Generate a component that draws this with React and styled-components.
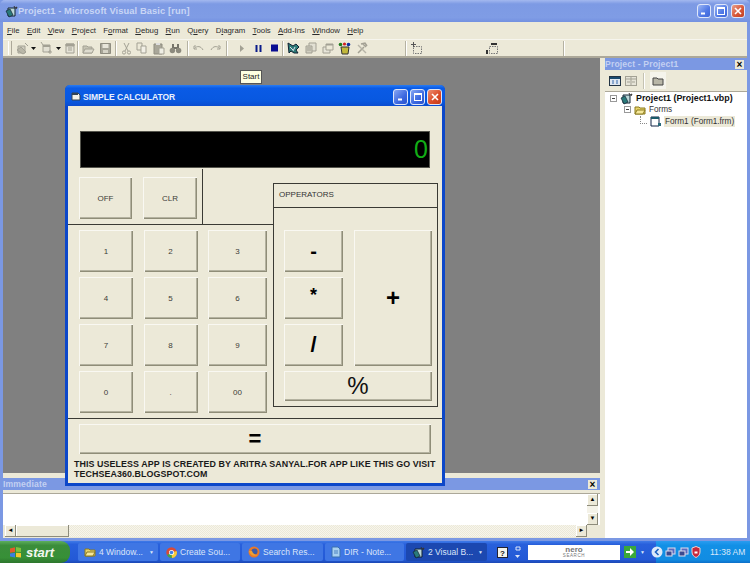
import React from 'react'
import styled, {createGlobalStyle, css} from 'styled-components'

const Global = createGlobalStyle`
	html, body { margin: 0; padding: 0; background: #ece9d8; }
	body { font-family: "Liberation Sans", Arial, sans-serif; }
`

const Screen = styled.div`
	position: relative;
	width: 750px;
	height: 563px;
	overflow: hidden;
	display: flex;
	flex-direction: column;
	background: #7b98e3;
`

/* main window */
const TitleBar = styled.div`
	height: 22px;
	flex: none;
	display: flex;
	align-items: center;
	padding: 0 5px 0 5px;
	background: linear-gradient(#a3b8ef, #7d9ae4 18%, #7f9ce5 80%, #7391e0);
	border-radius: 5px 5px 0 0;
`

const TitleText = styled.div`
	margin-left: 0;
	flex: 1;
	color: #c9d6f5;
	font-size: 9.3px;
	font-weight: bold;
	letter-spacing: 0.1px;
	white-space: nowrap;
`

const WinButtons = styled.div`
	display: flex;
	gap: ${p => p.$big ? 2 : 3}px;
`

const WinButton = styled.div`
	width: 14px;
	height: 14px;
	box-sizing: border-box;
	border: 1px solid #dfe7fa;
	border-radius: 3px;
	display: flex;
	align-items: center;
	justify-content: center;
	background: ${p => p.$red ? 'linear-gradient(135deg, #e9a08c, #d8583a 55%, #c24022)' : 'linear-gradient(135deg, #9db8f5, #4f78e6 60%, #3e66d8)'};
	${p => p.$big && css`
		width: 15px;
		height: 16px;
		background: ${p.$red ? 'linear-gradient(135deg, #ec8f74, #dc4d2a 55%, #c43a18)' : 'linear-gradient(135deg, #86a6f2, #3b68e0 60%, #2c54cc)'};
	`}
`

const AppBody = styled.div`
	flex: 1;
	min-height: 0;
	display: flex;
	flex-direction: column;
	margin: 0 3px 3px;
	background: #ece9d8;
`

const MenuBar = styled.div`
	height: 17px;
	flex: none;
	display: flex;
	align-items: center;
	gap: 7.3px;
	padding-left: 4px;
	font-size: 7.8px;
	color: #2a2a2a;
`

const ToolBar = styled.div`
	height: 19px;
	flex: none;
	box-sizing: border-box;
	display: flex;
	align-items: center;
	padding-left: 5px;
	border-top: 1px solid #f6f5ee;
	border-bottom: 2px solid #aca899;
`

const Handle = styled.div`
	width: 2px;
	height: 14px;
	border-left: 1px solid #fff;
	border-right: 1px solid #aca899;
`

const ToolSep = styled.div`
	width: 1px;
	height: 15px;
	margin-left: ${p => p.$at}px;
	background: #b5b2a2;
	box-shadow: 1px 0 #fff;
`

const ToolSlot = styled.div`
	margin-left: ${p => p.$at}px;
	display: flex;
	align-items: center;
`

const Workspace = styled.div`
	flex: 1;
	min-height: 0;
	display: flex;
`

const LeftPane = styled.div`
	width: 597px;
	flex: none;
	display: flex;
	flex-direction: column;
`

const Mdi = styled.div`
	flex: 1;
	background: #808080;
`

const DockTitle = styled.div`
	height: 12px;
	flex: none;
	display: flex;
	align-items: center;
	justify-content: space-between;
	padding: 0 3px 0 0;
	background: #7b98e3;
	color: #c3d0f2;
	font-size: 8.6px;
	font-weight: bold;
	letter-spacing: 0.15px;
`

const CloseBox = styled.div`
	width: 9px;
	height: 9px;
	background: #ece9d8;
	color: #000;
	font-size: 10px;
	font-weight: bold;
	line-height: 9px;
	text-align: center;
`

const Immediate = styled.div`
	flex: none;
	margin-top: 5px;
	margin-bottom: 1px;
`

const ImmBody = styled.div`
	margin-top: 3px;
	height: 32px;
	display: flex;
	background: #fff;
	border-top: 1px solid #aca899;
	box-sizing: border-box;
`

const ImmText = styled.div`
	flex: 1;
`

const VScroll = styled.div`
	width: 11px;
	margin-right: 2px;
	display: flex;
	flex-direction: column;
	justify-content: space-between;
	background: #f4f2e8;
`

const ScrollBtn = styled.div`
	width: ${p => p.$w || 11}px;
	height: ${p => p.$h || 12}px;
	flex: none;
	box-sizing: border-box;
	background: #ece9d8;
	box-shadow: inset -1px -1px #8e8c7c, inset 1px 1px #fff;
	color: #000;
	font-size: 6px;
	line-height: 11px;
	text-align: center;
`

const HScroll = styled.div`
	height: 12px;
	display: flex;
	padding: 0 13px 0 2px;
	background-color: #ece9d8;
`

const HTrack = styled.div`
	flex: 1;
	background: repeating-conic-gradient(#f7f5ec 0 25%, #ece9d8 0 50%) 0 0 / 2px 2px;
`

const ProjectPane = styled.div`
	width: 142px;
	margin-left: 5px;
	flex: none;
	display: flex;
	flex-direction: column;
`

const ProjectTools = styled.div`
	height: 21px;
	flex: none;
	display: flex;
	align-items: center;
	padding-left: 4px;
	gap: 4px;
`

const ToolSplit = styled.div`
	width: 1px;
	height: 16px;
	margin: 0 2px;
	background: #c5c2b2;
	box-shadow: 1px 0 #fff;
`

const Pressed = styled.div`
	width: 16px;
	height: 17px;
	display: flex;
	align-items: center;
	justify-content: center;
	background: #f5f4ec;
`

const Tree = styled.div`
	flex: 1;
	background: #fff;
	border-top: 1px solid #aca899;
`

const TreeRow = styled.div`
	height: 11.5px;
	display: flex;
	align-items: center;
	padding-left: ${p => p.$indent}px;
	gap: 3px;
	font-size: 8.2px;
	color: #333;
	white-space: nowrap;
	${p => p.$root && css`
		height: 12px;
		font-weight: bold;
		color: #111;
		font-size: 8.9px;
	`}
`

const Expander = styled.div`
	width: 7px;
	height: 7px;
	flex: none;
	box-sizing: border-box;
	border: 1px solid #999;
	position: relative;
	&::after {
		content: '';
		position: absolute;
		left: 1px;
		right: 1px;
		top: 2px;
		height: 1px;
		background: #444;
	}
`

const Branch = styled.span`
	width: 6px;
	height: 7px;
	flex: none;
	align-self: flex-start;
	border-left: 1px dotted #888;
	border-bottom: 1px dotted #888;
`

const Selected = styled.span`
	background: #ece9d8;
	padding: 1px;
`

/* taskbar */
const Taskbar = styled.div`
	height: 22px;
	flex: none;
	display: flex;
	align-items: center;
	background: linear-gradient(#3f7ae8, #2860dc 15%, #2359d6 85%, #1c48b4);
`

const StartButton = styled.div`
	width: 70px;
	height: 22px;
	flex: none;
	box-sizing: border-box;
	display: flex;
	align-items: center;
	gap: 4px;
	padding-left: 9px;
	border-radius: 0 9px 9px 0;
	background: linear-gradient(#5eae5e, #3b8d3b 20%, #379037 75%, #2d762d);
	color: #f2f7f0;
	font-size: 13px;
	font-style: italic;
	font-weight: bold;
`

const TaskGroup = styled.div`
	display: flex;
	gap: 2px;
	margin-left: 8px;
`

const TaskButton = styled.div`
	width: ${p => p.$w}px;
	height: 18px;
	box-sizing: border-box;
	display: flex;
	align-items: center;
	gap: 3px;
	padding: 0 4px 0 6px;
	border-radius: 2px;
	background: ${p => p.$active ? '#1c48b0' : '#3f76e4'};
	color: #dbe5f9;
	font-size: 8.5px;
	white-space: nowrap;
`

const TaskText = styled.span`
	flex: 1;
`

const Caret = styled.span`
	font-size: 5px;
	color: #dbe5f9;
`

const QuickIcons = styled.div`
	display: flex;
	align-items: center;
	gap: 6px;
	margin-left: 10px;
`

const NeroBox = styled.div`
	width: 92px;
	height: 15px;
	margin-left: 7px;
	flex: none;
	background: #fff;
	display: flex;
	flex-direction: column;
	align-items: center;
	justify-content: center;
	color: #777;
	font-size: 8px;
	line-height: 7px;
	font-weight: bold;
`

const NeroSmall = styled.span`
	font-size: 4.5px;
	line-height: 5px;
	font-weight: normal;
	letter-spacing: 0.6px;
`

const GoIcon = styled.div`
	margin-left: 4px;
	display: flex;
	align-items: center;
	gap: 4px;
`

const Tray = styled.div`
	margin-left: auto;
	width: 94px;
	height: 22px;
	flex: none;
	box-sizing: border-box;
	display: flex;
	align-items: center;
	gap: 2px;
	padding-left: 1px;
	background: linear-gradient(#2a9cf0, #1290e6 20%, #118ce2 85%, #0d6fc8);
`

const TrayChevron = styled.div`
	margin-left: -6px;
`

const Clock = styled.span`
	margin-left: 7px;
	color: #d8e8fa;
	font-size: 8.5px;
	white-space: nowrap;
`

/* things floating above the IDE */
const Tooltip = styled.div`
	position: absolute;
	left: 240px;
	top: 70px;
	width: 22px;
	height: 14px;
	box-sizing: border-box;
	background: #ffffe1;
	border: 1px solid #555;
	font-size: 8px;
	line-height: 12px;
	text-align: center;
	color: #222;
`

const FormWindow = styled.div`
	position: absolute;
	left: 65px;
	top: 85px;
	width: 380px;
	height: 401px;
	box-sizing: border-box;
	display: flex;
	flex-direction: column;
	background: #0c47c9;
	border-radius: 5px 5px 0 0;
	padding: 0 3px 3px;
`

const FormTitle = styled.div`
	height: 21px;
	flex: none;
	box-sizing: border-box;
	display: flex;
	align-items: center;
	margin: 0 -3px;
	padding: 2px 3px 0 6px;
	border-radius: 5px 5px 0 0;
	background: linear-gradient(#2a7cf2, #0a5be6 15%, #0858e0 75%, #0a4cd0);
`

const FormCaption = styled.div`
	flex: 1;
	margin-left: 2px;
	color: #eaf0fc;
	font-size: 8.5px;
	font-weight: bold;
`

const Client = styled.div`
	flex: 1;
	background: #ece9d8;
	display: flex;
	flex-direction: column;
`

const DisplayRow = styled.div`
	height: 63px;
	flex: none;
	box-sizing: border-box;
	padding: 25px 12px 1px;
`

const Display = styled.div`
	height: 37px;
	box-sizing: border-box;
	padding-right: 2px;
	background: #000;
	color: #12ad16;
	font-size: 25px;
	line-height: 36px;
	text-align: right;
	box-shadow: inset 0 0 0 1px #55554d;
`

const Middle = styled.div`
	height: 250px;
	flex: none;
	box-sizing: border-box;
	display: flex;
	border-bottom: 1px solid #3a3a34;
`

const LeftColumn = styled.div`
	width: 205px;
	flex: none;
`

const TopStrip = styled.div`
	height: 56px;
	box-sizing: border-box;
	border-bottom: 1px solid #3a3a34;
`

const TopCell = styled.div`
	width: 135px;
	height: 55px;
	box-sizing: border-box;
	display: flex;
	gap: 11px;
	padding: 8px 0 0 11px;
	border-right: 1px solid #3a3a34;
`

const Keypad = styled.div`
	display: grid;
	grid-template-columns: 54px 54px 59px;
	grid-auto-rows: 42px;
	column-gap: 10.5px;
	row-gap: 5px;
	padding: 5px 0 0 11px;
`

const KeyBtn = styled.div`
	box-sizing: border-box;
	display: flex;
	align-items: center;
	justify-content: center;
	background: #ece9d8;
	box-shadow: inset 1px 1px #f9f8f2, inset -1px -1px #8f8d78, inset -2px -2px #b4b2a0;
	color: ${p => p.$op ? '#000' : '#3c3c37'};
	font-size: ${p => p.$size || 8}px;
	font-weight: ${p => p.$op ? 'bold' : 'normal'};
	width: ${p => p.$w ? p.$w + 'px' : 'auto'};
	height: ${p => p.$h ? p.$h + 'px' : 'auto'};
	padding-bottom: ${p => p.$lift || 0}px;
	${p => p.$span && css`grid-row: span 3;`}
	${p => p.$wide && css`
		grid-column: span 2;
		font-weight: normal;
		color: #111;
	`}
`

const OpFrame = styled.div`
	width: 165px;
	height: 224px;
	margin-top: 14px;
	box-sizing: border-box;
	border: 1px solid #3a3a34;
`

const OpHeader = styled.div`
	height: 24px;
	box-sizing: border-box;
	padding-left: 5px;
	border-bottom: 1px solid #3a3a34;
	color: #333;
	font-size: 8px;
	line-height: 21px;
`

const OpGrid = styled.div`
	display: grid;
	grid-template-columns: 59px 78px;
	grid-template-rows: 42px 42px 42px 30px;
	column-gap: 11px;
	row-gap: 5px;
	padding: 22px 0 0 10px;
`

const Bottom = styled.div`
	flex: 1;
	padding: 5px 0 0 11px;
`

const Caption = styled.div`
	margin: 6px 0 0 -5px;
	width: 368px;
	color: #1a1a1a;
	font-size: 8.9px;
	line-height: 9.5px;
	font-weight: bold;
	letter-spacing: 0.08px;
	white-space: nowrap;
`

/* drawings */
const Svg = ({w = 12, h = 12, children}) => <svg width={w} height={h} viewBox={`0 0 ${w} ${h}`} style={{display: 'block', flex: 'none'}}>{children}</svg>

const Glyph = ({kind, color = '#fff'}) => {
	if (kind === 'min') return <Svg w={8} h={8}><rect x="1" y="5.5" width="4" height="2" fill={color}/></Svg>
	if (kind === 'max') return <Svg w={8} h={8}><rect x="0.5" y="0.5" width="7" height="7" fill="none" stroke={color}/><rect x="0.5" y="0.5" width="7" height="1.5" fill={color}/></Svg>
	return <Svg w={8} h={8}><path d="M1 1L7 7M7 1L1 7" stroke={color} strokeWidth="1.6"/></Svg>
}

const Controls = ({big}) => (
	<WinButtons $big={big}>
		<WinButton $big={big}><Glyph kind="min"/></WinButton>
		<WinButton $big={big}><Glyph kind="max"/></WinButton>
		<WinButton $big={big} $red><Glyph kind="close"/></WinButton>
	</WinButtons>
)

const VbIcon = () => (
	<Svg w={13} h={13}>
		<path d="M3 3h7v8H3z" fill="#bcd8d8" stroke="#123"/>
		<path d="M1 6l4-2 3 6-4 2z" fill="#2a7a7a" stroke="#123" strokeWidth="0.7"/>
		<path d="M9 1l1 2 2-1-1 2" stroke="#333" fill="none"/>
	</Svg>
)

const Gray = '#a3a194'

const Tb = {
	addProject: <Svg w={13} h={13}><path d="M2 4h7v7H2z" fill="#cfcdbf" stroke={Gray}/><path d="M1 8l4-3 5 5-3 2z" fill="#b9b7a8" stroke={Gray}/><path d="M9 1l3 3" stroke={Gray}/></Svg>,
	addForm: <Svg w={13} h={13}><path d="M3 3h7v7H3z" fill="#e2e0d3" stroke={Gray}/><path d="M3 3h7v2H3z" fill={Gray}/><path d="M10 8v4M8 10h4M1 0l2 3" stroke={Gray}/></Svg>,
	menu: <Svg w={10} h={11}><path d="M1 1h8v9H1z" fill="#e4e2d6" stroke={Gray}/><path d="M1 1h8v2H1zM3 5h4M3 7h4" fill={Gray} stroke={Gray}/></Svg>,
	open: <Svg w={13} h={11}><path d="M1 3h4l1 1h4v6H1z" fill="#c6c4b4" stroke={Gray}/><path d="M3 6h9l-2 4H1z" fill="#dedccf" stroke={Gray}/></Svg>,
	save: <Svg w={11} h={11}><path d="M.5.5h10v10H.5z" fill="#a6a497" stroke="#8f8d80"/><path d="M2.5 1h6v4h-6z" fill="#e8e6da"/><path d="M3 7h5v3H3z" fill="#d5d3c6"/></Svg>,
	cut: <Svg w={9} h={13}><path d="M2 1l4 8M7 1L3 9" stroke={Gray} fill="none"/><circle cx="2" cy="10.5" r="1.6" fill="none" stroke={Gray}/><circle cx="7" cy="10.5" r="1.6" fill="none" stroke={Gray}/></Svg>,
	copy: <Svg w={11} h={12}><path d="M1 1h5v7H1z" fill="#ece9d8" stroke={Gray}/><path d="M5 4h5v7H5z" fill="#f2f0e6" stroke={Gray}/></Svg>,
	paste: <Svg w={12} h={13}><path d="M1 2h8v10H1z" fill="#a9a79a" stroke="#8f8d80"/><path d="M3 1h4v2H3z" fill="#ddd"/><path d="M6 6h5v6H6z" fill="#efeee4" stroke={Gray}/></Svg>,
	find: <Svg w={13} h={11}><circle cx="3.4" cy="7.5" r="2.7" fill="#8c8a7e"/><circle cx="9.6" cy="7.5" r="2.7" fill="#8c8a7e"/><path d="M3 1h2v4H3zM8 1h2v4H8zM5 4h3v2H5z" fill="#76746a"/></Svg>,
	undo: <Svg w={11} h={9}><path d="M3 2H1v3h3M1.5 4.5C4 1.5 8 2 10 6" fill="none" stroke={Gray}/></Svg>,
	redo: <Svg w={11} h={9}><path d="M8 2h2v3H7M9.5 4.5C7 1.5 3 2 1 6" fill="none" stroke={Gray}/></Svg>,
	play: <Svg w={6} h={9}><path d="M1 1l4 3.5L1 8z" fill={Gray}/></Svg>,
	pause: <Svg w={7} h={9}><path d="M0.5 1h2v7h-2zM4.5 1h2v7h-2z" fill="#0a1c8a"/></Svg>,
	stop: <Svg w={8} h={8}><rect width="7" height="7" y="0.5" fill="#0a0e92"/></Svg>,
	explorer: <Svg w={14} h={13}><path d="M1 1l5 3 3-2 3 3-3 3 2 3H7L4 9 2 11z" fill="#2d7c78" stroke="#123"/><path d="M3 5l3 3M8 5l-2 4" stroke="#dde" /></Svg>,
	props: <Svg w={12} h={12}><path d="M4 1h7v8H4z" fill="#e2e0d3" stroke={Gray}/><path d="M1 4h6v7H1z" fill="#d0cec0" stroke={Gray}/><path d="M2 6h4M2 8h4" stroke={Gray}/></Svg>,
	layout: <Svg w={12} h={11}><path d="M1 4h7v6H1z" fill="#e6e4d8" stroke={Gray}/><path d="M4 1h7v6H4z" fill="#ece9d8" stroke={Gray}/><path d="M4 1h7v1.5H4z" fill={Gray}/></Svg>,
	browser: <Svg w={13} h={13}><path d="M3 5h8l-1 7H4z" fill="#c2b83a" stroke="#333"/><circle cx="2.5" cy="2.5" r="1.8" fill="#1a7a1a"/><circle cx="6.5" cy="2" r="1.6" fill="#d02020"/><circle cx="10.5" cy="2.5" r="1.8" fill="#1030a0"/></Svg>,
	tools: <Svg w={12} h={12}><path d="M2 11l6-6M7 2l3 3M5 2l4-1 2 3" stroke={Gray} strokeWidth="1.5" fill="none"/><path d="M2 3l8 8" stroke="#b7b5a8" strokeWidth="1.4"/></Svg>,
	align1: <Svg w={13} h={13}><rect x="3.5" y="4.5" width="8" height="7" fill="none" stroke="#777" strokeDasharray="1.5 1"/><path d="M3.5 0v5M1 2.5h5" stroke="#555"/></Svg>,
	align2: <Svg w={12} h={13}><rect x="3.5" y="4.5" width="8" height="7" fill="none" stroke="#777" strokeDasharray="1.5 1"/><path d="M1 8v4" stroke="#333" strokeWidth="2"/><path d="M5 2h6" stroke="#333" strokeWidth="2"/></Svg>,
}

const Arrow = () => <Svg w={5} h={3}><path d="M0 0h5L2.5 3z" fill="#111"/></Svg>

const SmallFolder = ({open}) => (
	<Svg w={12} h={10}>
		<path d="M1 2h4l1 1h5v6H1z" fill={open ? '#e8d46a' : '#b8b6a8'} stroke={open ? '#8a7a20' : '#444'}/>
		{open && <path d="M3 5h8l-2 4H1z" fill="#f6e89a" stroke="#8a7a20"/>}
	</Svg>
)

const FormIcon = () => <Svg w={11} h={11}><path d="M1 1h8v9H1z" fill="#fff" stroke="#124"/><path d="M1 1h8v2H1z" fill="#1a5a6a"/><path d="M8 7h3v3H8z" fill="#2a6a7a"/></Svg>

const Flag = () => (
	<Svg w={13} h={13}>
		<path d="M1 2.5l5-1.2v4.7l-5 .7z" fill="#e2582c"/>
		<path d="M7 1l5 1v4l-5-.2z" fill="#7ec13c"/>
		<path d="M1 7.5l5-.7v4.7l-5-1z" fill="#3c7ee0"/>
		<path d="M7 6.8l5 .2v4.5l-5-.6z" fill="#f5c52c"/>
	</Svg>
)

const Chrome = () => (
	<Svg w={11} h={11}>
		<circle cx="5.5" cy="5.5" r="5.2" fill="#d94a38"/>
		<path d="M5.5 5.5L1 8a5.2 5.2 0 0 0 5 3z" fill="#3aa853"/>
		<path d="M5.5 5.5L6 11a5.2 5.2 0 0 0 4.6-7z" fill="#f7cc3c"/>
		<circle cx="5.5" cy="5.5" r="2.5" fill="#fff"/>
		<circle cx="5.5" cy="5.5" r="1.8" fill="#3f7ee8"/>
	</Svg>
)

const Firefox = () => (
	<Svg w={12} h={12}>
		<circle cx="6" cy="6" r="5.5" fill="#e8782a"/>
		<circle cx="6.5" cy="5.5" r="3" fill="#3a5aa8"/>
		<path d="M1 5c1 4 5 6 9 4-3 0-5-1-6-4z" fill="#f0a030"/>
	</Svg>
)

const Notepad = () => <Svg w={10} h={12}><path d="M1 1h6l2 2v8H1z" fill="#a8d0f0" stroke="#3a70b0"/><path d="M3 5h4M3 7h4" stroke="#4a80c0"/></Svg>

const Net = () => <Svg w={11} h={11}><rect x="3" y="1" width="7" height="6" fill="#5a6ac0" stroke="#dde"/><rect x="1" y="4" width="6" height="5" fill="#3a4a90" stroke="#dde"/></Svg>

const numbers = ['1', '2', '3', '4', '5', '6', '7', '8', '9', '0', '.', '00']

export default function App() {
	return (
		<Screen>
			<Global/>
			<TitleBar>
				<VbIcon/>
				<TitleText>Project1 - Microsoft Visual Basic [run]</TitleText>
				<Controls/>
			</TitleBar>
			<AppBody>
				<MenuBar>
					<span><u>F</u>ile</span>
					<span><u>E</u>dit</span>
					<span><u>V</u>iew</span>
					<span><u>P</u>roject</span>
					<span>F<u>o</u>rmat</span>
					<span><u>D</u>ebug</span>
					<span><u>R</u>un</span>
					<span>Q<u>u</u>ery</span>
					<span>D<u>i</u>agram</span>
					<span><u>T</u>ools</span>
					<span><u>A</u>dd-Ins</span>
					<span><u>W</u>indow</span>
					<span><u>H</u>elp</span>
				</MenuBar>
				<ToolBar>
					<Handle/>
					<ToolSlot $at={4}>{Tb.addProject}</ToolSlot>
					<ToolSlot $at={2}><Arrow/></ToolSlot>
					<ToolSlot $at={4}>{Tb.addForm}</ToolSlot>
					<ToolSlot $at={3}><Arrow/></ToolSlot>
					<ToolSlot $at={4}>{Tb.menu}</ToolSlot>
					<ToolSep $at={2}/>
					<ToolSlot $at={4}>{Tb.open}</ToolSlot>
					<ToolSlot $at={5}>{Tb.save}</ToolSlot>
					<ToolSep $at={4}/>
					<ToolSlot $at={6}>{Tb.cut}</ToolSlot>
					<ToolSlot $at={5}>{Tb.copy}</ToolSlot>
					<ToolSlot $at={6}>{Tb.paste}</ToolSlot>
					<ToolSlot $at={4}>{Tb.find}</ToolSlot>
					<ToolSep $at={5}/>
					<ToolSlot $at={5}>{Tb.undo}</ToolSlot>
					<ToolSlot $at={6}>{Tb.redo}</ToolSlot>
					<ToolSep $at={5}/>
					<ToolSlot $at={12}>{Tb.play}</ToolSlot>
					<ToolSlot $at={10}>{Tb.pause}</ToolSlot>
					<ToolSlot $at={9}>{Tb.stop}</ToolSlot>
					<ToolSep $at={3}/>
					<ToolSlot $at={4}>{Tb.explorer}</ToolSlot>
					<ToolSlot $at={4}>{Tb.props}</ToolSlot>
					<ToolSlot $at={5}>{Tb.layout}</ToolSlot>
					<ToolSlot $at={4}>{Tb.browser}</ToolSlot>
					<ToolSlot $at={5}>{Tb.tools}</ToolSlot>
					<ToolSep $at={37}/>
					<ToolSlot $at={4}>{Tb.align1}</ToolSlot>
					<ToolSlot $at={63}>{Tb.align2}</ToolSlot>
					<ToolSep $at={65}/>
				</ToolBar>
				<Workspace>
					<LeftPane>
						<Mdi/>
						<Immediate>
							<DockTitle>Immediate<CloseBox>×</CloseBox></DockTitle>
							<ImmBody>
								<ImmText/>
								<VScroll>
									<ScrollBtn>▲</ScrollBtn>
									<ScrollBtn>▼</ScrollBtn>
								</VScroll>
							</ImmBody>
							<HScroll>
								<ScrollBtn>◄</ScrollBtn>
								<ScrollBtn $w={53}/>
								<HTrack/>
								<ScrollBtn>►</ScrollBtn>
							</HScroll>
						</Immediate>
					</LeftPane>
					<ProjectPane>
						<DockTitle>Project - Project1<CloseBox>×</CloseBox></DockTitle>
						<ProjectTools>
							<Svg w={12} h={10}><rect x="0.5" y="0.5" width="11" height="9" fill="#dfe6f0" stroke="#234"/><rect x="1" y="1" width="10" height="2" fill="#1a4a70"/><path d="M3 5h2M7 5h2M3 7h2M7 7h2" stroke="#36a"/></Svg>
							<Svg w={12} h={10}><rect x="0.5" y="0.5" width="11" height="9" fill="#e6e4d8" stroke={Gray}/><path d="M6 1v8M1 3h10M2 6h3M7 6h3" stroke={Gray}/></Svg>
							<ToolSplit/>
							<Pressed><SmallFolder/></Pressed>
						</ProjectTools>
						<Tree>
							<TreeRow $root $indent={5}><Expander/><VbIcon/>Project1 (Project1.vbp)</TreeRow>
							<TreeRow $indent={19}><Expander/><SmallFolder open/>Forms</TreeRow>
							<TreeRow $indent={35}><Branch/><FormIcon/><Selected>Form1 (Form1.frm)</Selected></TreeRow>
						</Tree>
					</ProjectPane>
				</Workspace>
			</AppBody>
			<Taskbar>
				<StartButton><Flag/>start</StartButton>
				<TaskGroup>
					<TaskButton $w={80}><SmallFolder open/><TaskText>4 Window...</TaskText><Caret>▼</Caret></TaskButton>
					<TaskButton $w={80}><Chrome/><TaskText>Create Sou...</TaskText></TaskButton>
					<TaskButton $w={81}><Firefox/><TaskText>Search Res...</TaskText></TaskButton>
					<TaskButton $w={79}><Notepad/><TaskText>DIR - Note...</TaskText></TaskButton>
					<TaskButton $w={81} $active><VbIcon/><TaskText>2 Visual B...</TaskText><Caret>▼</Caret></TaskButton>
				</TaskGroup>
				<QuickIcons>
					<Svg w={11} h={11}><rect x="0.5" y="0.5" width="10" height="10" fill="#f4f4ec" stroke="#223"/><text x="5.5" y="8.5" fontSize="8" fontWeight="bold" textAnchor="middle" fill="#111">?</text></Svg>
					<Svg w={7} h={14}><path d="M2 2h4v3H2z" fill="none" stroke="#dbe5f9"/><path d="M1 10h5L3.5 13z" fill="#dbe5f9"/></Svg>
				</QuickIcons>
				<NeroBox>nero<NeroSmall>SEARCH</NeroSmall></NeroBox>
				<GoIcon>
					<Svg w={12} h={12}><rect width="12" height="12" fill="#3aa83a"/><path d="M2 5h4V2l4 4-4 4V7H2z" fill="#fff"/></Svg>
					<Caret>▼</Caret>
				</GoIcon>
				<Tray>
					<TrayChevron>
						<Svg w={12} h={14}><circle cx="6" cy="7" r="5.5" fill="#dbe9fa"/><path d="M7.500 4L4.500 7l3 3" fill="none" stroke="#1a60c0" strokeWidth="1.6"/></Svg>
					</TrayChevron>
					<Net/>
					<Net/>
					<Svg w={10} h={12}><path d="M5 0.500l4 1.500v4c0 3-2 4.500-4 5.500C3 10.500 1 9 1 6V2z" fill="#c8283c" stroke="#f0d0d0"/><path d="M3.500 5.500h3v2h-3z" fill="#fff"/></Svg>
					<Clock>11:38 AM</Clock>
				</Tray>
			</Taskbar>

			<Tooltip>Start</Tooltip>

			<FormWindow>
				<FormTitle>
					<Svg w={10} h={9}><path d="M1 1h6l2 2v5H1z" fill="#f2f2ea" stroke="#345"/><path d="M1 1h6v2H1z" fill="#345"/></Svg>
					<FormCaption>SIMPLE CALCULATOR</FormCaption>
					<Controls big/>
				</FormTitle>
				<Client>
					<DisplayRow><Display>0</Display></DisplayRow>
					<Middle>
						<LeftColumn>
							<TopStrip>
								<TopCell>
									<KeyBtn $w={53} $h={42}>OFF</KeyBtn>
									<KeyBtn $w={54} $h={42}>CLR</KeyBtn>
								</TopCell>
							</TopStrip>
							<Keypad>
								{numbers.map(n => <KeyBtn key={n}>{n}</KeyBtn>)}
							</Keypad>
						</LeftColumn>
						<OpFrame>
							<OpHeader>OPPERATORS</OpHeader>
							<OpGrid>
								<KeyBtn $op $size={20}>-</KeyBtn>
								<KeyBtn $op $span $size={24}>+</KeyBtn>
								<KeyBtn $op $size={18} $lift={6}>*</KeyBtn>
								<KeyBtn $op $size={22}>/</KeyBtn>
								<KeyBtn $wide $size={24}>%</KeyBtn>
							</OpGrid>
						</OpFrame>
					</Middle>
					<Bottom>
						<KeyBtn $op $w={352} $h={30} $size={22}>=</KeyBtn>
						<Caption>THIS USELESS APP IS CREATED BY ARITRA SANYAL.FOR APP LIKE THIS GO VISIT<br/>TECHSEA360.BLOGSPOT.COM</Caption>
					</Bottom>
				</Client>
			</FormWindow>
		</Screen>
	)
}
